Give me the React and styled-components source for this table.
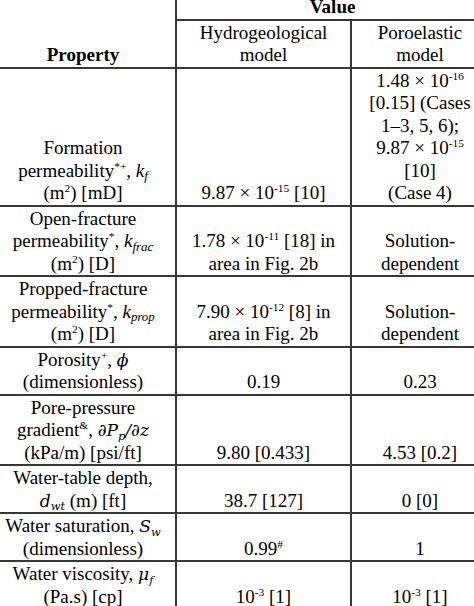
import React from 'react'
import styled, { createGlobalStyle } from 'styled-components'

const Global = createGlobalStyle`
  html, body {
    margin: 0;
    padding: 0;
    background: #fff;
    overflow: hidden;
    font-family: "Liberation Serif", serif;
  }
`

const Page = styled.div`
  width: 474px;
  height: 606px;
  overflow: hidden;
  background: #fff;
`

const Sheet = styled.div`
  margin: -7px 0 0 -11px;
  width: 499px;
`

const Table = styled.table`
  border-collapse: collapse;
  table-layout: fixed;
  width: 499px;
  font-family: "Liberation Serif", serif;
  font-size: 19px;
  line-height: 22.5px;
  color: #000;
`

const Cell = styled.td`
  border: 2px solid #383838;
  padding: 1px 2px 0;
  text-align: center;
  vertical-align: bottom;
  white-space: nowrap;
  font-family: "Liberation Serif", serif;
  font-size: 19px;
  font-weight: ${(p) => (p.$head ? 700 : 400)};
`

const Sup = styled.sup`
  font-size: 0.6em;
  line-height: 0;
  vertical-align: baseline;
  position: relative;
  top: -0.6em;
`

const Sub = styled.sub`
  font-size: 0.68em;
  line-height: 0;
  vertical-align: baseline;
  position: relative;
  top: 0.3em;
`

const It = styled.i`
  font-style: italic;
`

const MathVar = styled.span`
  font-family: "DejaVu Serif", serif;
  font-style: italic;
  font-size: 0.9em;
`

const MathSub = styled.sub`
  font-family: "DejaVu Serif", serif;
  font-style: italic;
  font-size: 0.6em;
  line-height: 0;
  vertical-align: baseline;
  position: relative;
  top: 0.35em;
`

const Exp = ({ children }) => <Sup>{children}</Sup>

export default function App() {
  return (
    <Page>
      <Global />
      <Sheet>
        <Table>
          <colgroup>
            <col style={{ width: 186 }} />
            <col style={{ width: 175 }} />
            <col style={{ width: 138 }} />
          </colgroup>
          <tbody>
            <tr>
              <Cell as="th" $head rowSpan={2}>Property</Cell>
              <Cell as="th" $head colSpan={2}>Value</Cell>
            </tr>
            <tr>
              <Cell>Hydrogeological<br />model</Cell>
              <Cell>Poroelastic<br />model</Cell>
            </tr>
            <tr>
              <Cell>
                Formation<br />
                permeability<Exp>*+</Exp>, <It>k</It><Sub><It>f</It></Sub><br />
                (m<Exp>2</Exp>) [mD]
              </Cell>
              <Cell>9.87 × 10<Exp>-15</Exp> [10]</Cell>
              <Cell>
                1.48 × 10<Exp>-16</Exp><br />
                [0.15] (Cases<br />
                1–3, 5, 6);<br />
                9.87 × 10<Exp>-15</Exp><br />
                [10]<br />
                (Case 4)
              </Cell>
            </tr>
            <tr>
              <Cell>
                Open-fracture<br />
                permeability<Exp>*</Exp>, <It>k</It><Sub><It>frac</It></Sub><br />
                (m<Exp>2</Exp>) [D]
              </Cell>
              <Cell>1.78 × 10<Exp>-11</Exp> [18] in<br />area in Fig. 2b</Cell>
              <Cell>Solution-<br />dependent</Cell>
            </tr>
            <tr>
              <Cell>
                Propped-fracture<br />
                permeability<Exp>*</Exp>, <It>k</It><Sub><It>prop</It></Sub><br />
                (m<Exp>2</Exp>) [D]
              </Cell>
              <Cell>7.90 × 10<Exp>-12</Exp> [8] in<br />area in Fig. 2b</Cell>
              <Cell>Solution-<br />dependent</Cell>
            </tr>
            <tr>
              <Cell>
                Porosity<Exp>+</Exp>, <MathVar>ϕ</MathVar><br />
                (dimensionless)
              </Cell>
              <Cell>0.19</Cell>
              <Cell>0.23</Cell>
            </tr>
            <tr>
              <Cell>
                Pore-pressure<br />
                gradient<Exp>&amp;</Exp>, <MathVar>∂P</MathVar><MathSub>p</MathSub><MathVar>/∂z</MathVar><br />
                (kPa/m) [psi/ft]
              </Cell>
              <Cell>9.80 [0.433]</Cell>
              <Cell>4.53 [0.2]</Cell>
            </tr>
            <tr>
              <Cell>
                Water-table depth,<br />
                <MathVar>d</MathVar><MathSub>wt</MathSub> (m) [ft]
              </Cell>
              <Cell>38.7 [127]</Cell>
              <Cell>0 [0]</Cell>
            </tr>
            <tr>
              <Cell>
                Water saturation, <MathVar>S</MathVar><MathSub>w</MathSub><br />
                (dimensionless)
              </Cell>
              <Cell>0.99<Exp>#</Exp></Cell>
              <Cell>1</Cell>
            </tr>
            <tr>
              <Cell>
                Water viscosity, <MathVar>μ</MathVar><MathSub>f</MathSub><br />
                (Pa.s) [cp]
              </Cell>
              <Cell>10<Exp>-3</Exp> [1]</Cell>
              <Cell>10<Exp>-3</Exp> [1]</Cell>
            </tr>
          </tbody>
        </Table>
      </Sheet>
    </Page>
  )
}
